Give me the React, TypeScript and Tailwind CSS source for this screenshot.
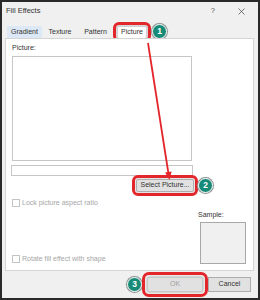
import React from "react";

const Badge = ({ n }: { n: string }) => (
    <div className="w-[15px] h-[15px] rounded-full bg-[#178a78] border-[1.5px] border-white ring-1 ring-[#8f9a98] shadow-[0_0_2px_rgba(0,0,0,0.4)] flex items-center justify-center text-white text-[8.5px] font-bold leading-none">
        {n}
    </div>
);

const Check = ({ label }: { label: string }) => (
    <div className="flex items-center gap-[2px] text-[#a6a6a6]">
        <div className="w-[8px] h-[8px] border border-[#c4c4c4] bg-white" />
        <span className="leading-[10px]">{label}</span>
    </div>
);

const App = () => {
    return (
        <div className="w-[260px] h-[300px] border-2 border-[#2a2a2a] bg-[#f0f0f0] relative flex flex-col overflow-hidden font-['Liberation_Sans',Arial,sans-serif] text-[7px] text-[#333]">
            {/* Title bar */}
            <div className="h-[18px] flex items-center pl-[4px] pr-[13px] text-[7.5px]">
                <span>Fill Effects</span>
                <span className="ml-auto mr-[23px] text-[#555]">?</span>
                <svg width="7" height="7" viewBox="0 0 7 7" className="text-[#555]">
                    <path d="M0.5 0.5L6.5 6.5M6.5 0.5L0.5 6.5" stroke="currentColor" strokeWidth="0.8" />
                </svg>
            </div>

            {/* Tabs */}
            <div className="h-[18px] flex items-end pl-[5px]">
                <div className="w-[35px] h-[12px] bg-[#dce8f5] flex items-center justify-center">Gradient</div>
                <div className="w-[36px] h-[12px] flex items-center justify-center">Texture</div>
                <div className="w-[35px] h-[12px] flex items-center justify-center">Pattern</div>
                <div className="ml-[4px] w-[30px] h-[12px] bg-white border border-b-0 border-[#d0d0d0] flex items-center justify-center rounded-[2px] outline-[3px] outline-solid outline-[#e3262b] outline-offset-[1px] shadow-[0_0_3px_rgba(0,0,0,0.3)]">
                    Picture
                </div>
                <div className="ml-[5px] mb-[-1px]">
                    <Badge n="1" />
                </div>
            </div>

            {/* Panel */}
            <div className="flex-1 ml-[3px] mr-[4px] bg-white border border-[#d5d5d5] flex flex-col pl-[6px] pt-[4px] pb-[6px]">
                <div className="h-[10px] leading-[10px]">Picture:</div>
                <div className="mt-[3px] w-[180px] h-[105px] border border-[#c6c6c6]" />
                <div className="mt-[4px] ml-[-1px] w-[182px] h-[11px] border border-[#c6c6c6]" />
                <div className="mt-[2px] flex items-center">
                    <div className="ml-[124px] w-[58px] h-[13px] bg-[#e1e1e1] border border-[#adadad] flex items-center justify-center rounded-[2px] outline-[3px] outline-solid outline-[#e3262b] outline-offset-[1px] shadow-[0_0_3px_rgba(0,0,0,0.3)]">
                        Select Picture...
                    </div>
                    <div className="ml-[4px]">
                        <Badge n="2" />
                    </div>
                </div>
                <div className="mt-[5px]">
                    <Check label="Lock picture aspect ratio" />
                </div>
                <div className="flex-1 flex justify-between items-end pr-[7px]">
                    <Check label="Rotate fill effect with shape" />
                    <div className="flex flex-col">
                        <div className="h-[10px] leading-[10px] ml-[-2px]">Sample:</div>
                        <div className="mt-[2px] w-[46px] h-[42px] bg-[#f0f0f0] border border-[#a8a8a8]" />
                    </div>
                </div>
            </div>

            {/* Footer */}
            <div className="h-[27px] flex items-center justify-end pr-[7px]">
                <Badge n="3" />
                <div className="ml-[5px] mr-[5px] w-[56px] h-[15px] bg-[#e1e1e1] border border-[#c8c8c8] text-[#a0a0a0] flex items-center justify-center rounded-[2px] outline-[3px] outline-solid outline-[#e3262b] outline-offset-[2px] shadow-[0_0_3px_rgba(0,0,0,0.3)]">
                    OK
                </div>
                <div className="w-[43px] h-[15px] bg-[#e1e1e1] border border-[#adadad] flex items-center justify-center">
                    Cancel
                </div>
            </div>

            {/* Annotation arrow */}
            <svg className="absolute left-0 top-0 pointer-events-none" width="260" height="300">
                <line x1="146" y1="41" x2="166.3" y2="170.5" stroke="#e3262b" strokeWidth="1.8" />
                <polygon points="167.5,178 169.6,169.5 163.1,170.6" fill="#e3262b" />
            </svg>
        </div>
    );
};

export default App;
